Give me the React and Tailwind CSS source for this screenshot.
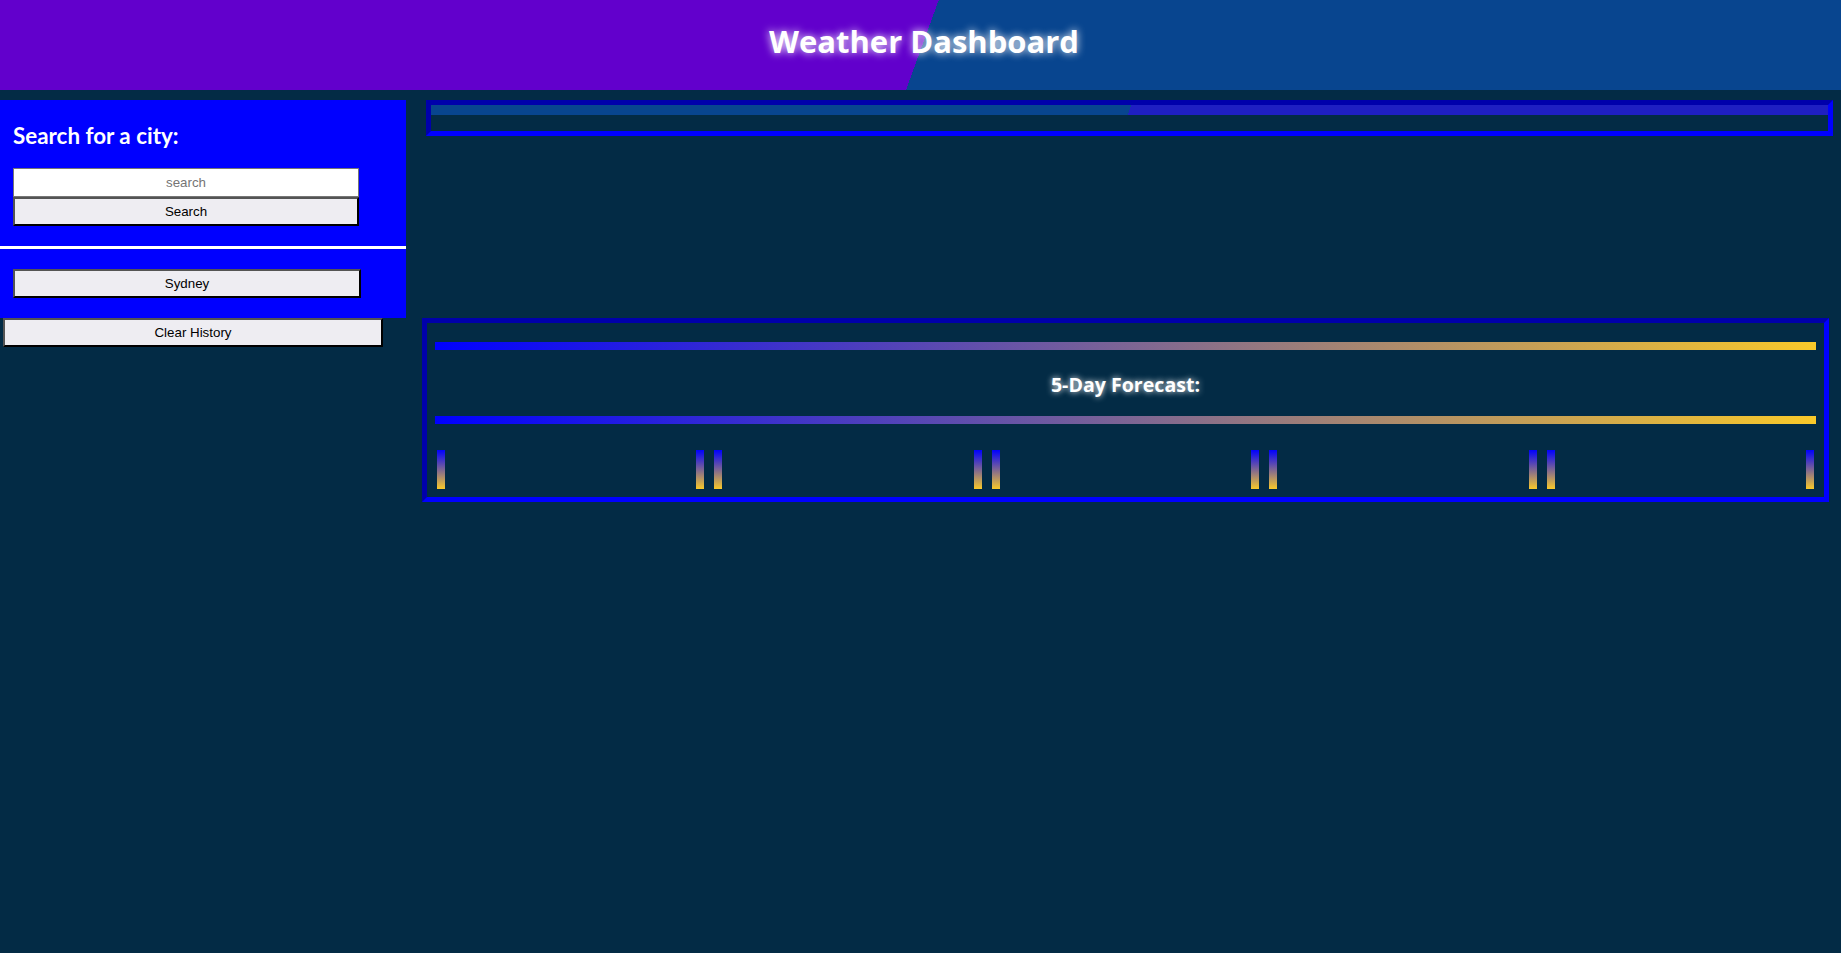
export default function App() {
  const bar = "w-2 h-[39px] bg-[linear-gradient(180deg,#0000ff,#f9c92a)]";
  const hbar = "h-2 bg-[linear-gradient(90deg,#0000ff,#f9c92a)]";
  const btn = "block h-[29px] bg-[#eeedf2] border-2 border-black [border-style:outset] text-[13.33px] text-black text-center font-['Liberation_Sans',sans-serif]";
  return (
    <div className="min-h-[953px] bg-[#032b45] font-['Liberation_Sans',sans-serif]">
      <header className="h-[90px] flex items-center justify-center pl-[7px] pb-[7px] bg-[linear-gradient(110deg,#6200cc_50.1%,#08458f_50.1%)]">
        <h1 className="text-[31px] font-bold text-white [text-shadow:0_0_8px_#fff] font-['Comic_Sans_MS','Open_Sans',sans-serif]">Weather Dashboard</h1>
      </header>
      <div className="flex">
        <aside className="w-[406px] shrink-0">
          <div className="mt-[10px] h-[218px] bg-[#0000ff] flex flex-col">
            <div className="h-[146px] pl-[13px]">
              <h2 className="pt-[22px] h-[68px] text-[22.4px] leading-[27px] font-bold text-white font-['Lato',sans-serif]">Search for a city:</h2>
              <input placeholder="search" className="block w-[346px] h-[29px] bg-white border border-[#767676] text-center text-[13.33px] placeholder:text-[#757575]" />
              <button className={btn + " w-[346px]"}>Search</button>
            </div>
            <div className="h-[3px] bg-white" />
            <div className="pl-[13px] pt-5">
              <button className={btn + " w-[348px]"}>Sydney</button>
            </div>
          </div>
          <button className={btn + " w-[380px] ml-[3px]"}>Clear History</button>
        </aside>
        <main className="flex-1 min-w-0">
          <section className="mt-[10px] ml-5 mr-2 h-9 border-[5px] border-[#0000ff] [border-style:inset]">
            <div className="h-[10px] bg-[linear-gradient(110deg,#08458f_50%,#1f1fc2_50%)]" />
          </section>
          <section className="mt-[182px] ml-4 mr-3 h-[184px] border-[5px] border-[#0000ff] [border-style:inset] px-2 pt-[19px]">
            <div className={hbar} />
            <h3 className="h-[66px] pt-[3px] flex items-center justify-center text-[19.6px] font-bold text-white [text-shadow:0_0_6px_#fff] font-['Comic_Sans_MS','Open_Sans',sans-serif]">5-Day Forecast:</h3>
            <div className={hbar} />
            <div className="mt-[26px] mx-[2px] grid grid-cols-5 gap-[10px]">
              {[1, 2, 3, 4, 5].map((n) => (
                <div key={n} className="flex justify-between">
                  <div className={bar} />
                  <div className={bar} />
                </div>
              ))}
            </div>
          </section>
        </main>
      </div>
    </div>
  );
}
